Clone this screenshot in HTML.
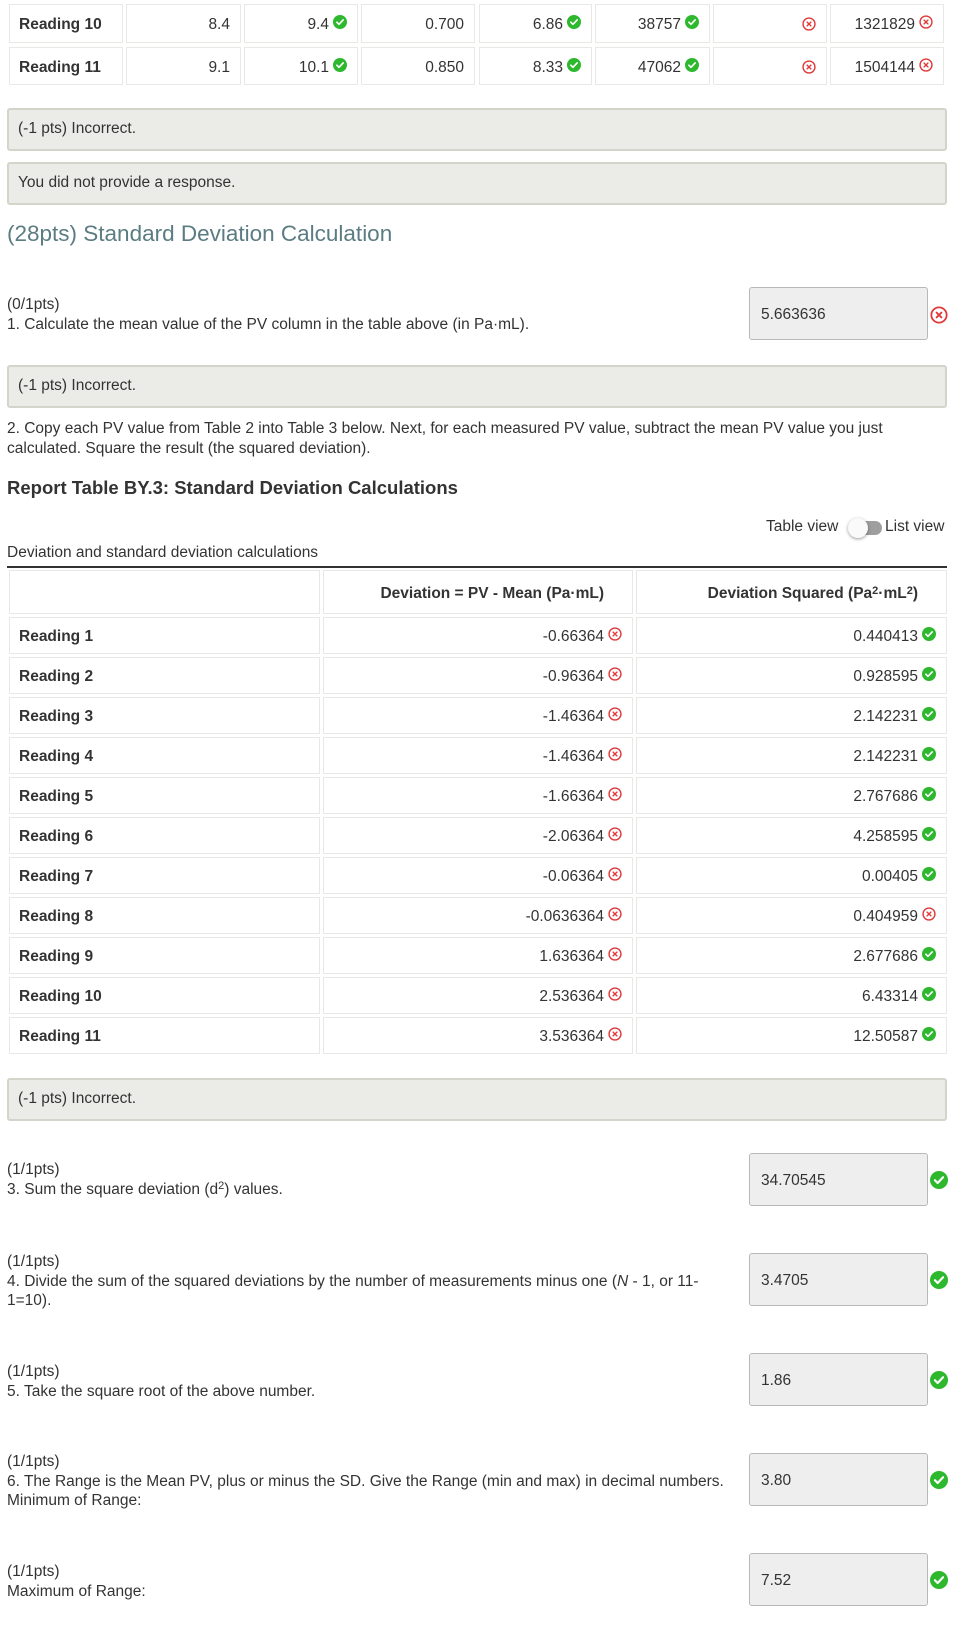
<!DOCTYPE html>
<html><head><meta charset="utf-8">
<style>
*{margin:0;padding:0;box-sizing:border-box}
body{width:977px;height:1651px;background:#fff;font-family:"Liberation Sans",Arial,sans-serif;color:#333;position:relative;overflow:hidden;font-size:15.5px}
.a{position:absolute}
.c{position:absolute;border:1px solid #e8e8e4;display:flex;align-items:center;justify-content:flex-end;padding-right:10px;padding-top:3px;white-space:nowrap}
.c.l{justify-content:flex-start;padding-left:9px;font-weight:bold}
.ic{width:14px;height:14px;margin-left:4px;position:relative;top:-3px;flex:none}
.fb{position:absolute;left:7px;width:940px;height:43px;background:#ebebe7;border:2px solid #d4d4ca;border-radius:3px;padding:10px 9px;font-size:15.5px}
.t{position:absolute;left:7px;white-space:nowrap;line-height:19.5px;font-size:15.5px}
.in{position:absolute;left:749px;width:179px;height:53px;background:#eeeeee;border:1px solid #b8b8b8;border-radius:3px;padding:18px 11px;font-size:15.5px}
.bi{position:absolute;left:930px;width:18px;height:18px}
.sp{font-size:11px;vertical-align:top;position:relative;top:-3px}
</style></head><body>
<svg width="0" height="0" style="position:absolute">
<defs>
<symbol id="ok" viewBox="0 0 20 20"><circle cx="10" cy="10" r="10" fill="#2eb82e"/><path d="M5.5 10.3l3 3 6-6.3" fill="none" stroke="#fff" stroke-width="2.4" stroke-linecap="round" stroke-linejoin="round"/></symbol>
<symbol id="no" viewBox="0 0 20 20"><circle cx="10" cy="10" r="8.5" fill="none" stroke="#e03a3a" stroke-width="2"/><path d="M7.3 7.3l5.4 5.4M12.7 7.3l-5.4 5.4" stroke="#e03a3a" stroke-width="2" stroke-linecap="round"/></symbol>
</defs></svg>

<div class="c l" style="left:9px;top:4px;width:114px;height:39px">Reading 10</div>
<div class="c" style="left:126px;top:4px;width:115px;height:39px">8.4</div>
<div class="c" style="left:244px;top:4px;width:114px;height:39px">9.4<svg class="ic"><use href="#ok"/></svg></div>
<div class="c" style="left:361px;top:4px;width:114px;height:39px">0.700</div>
<div class="c" style="left:479px;top:4px;width:113px;height:39px">6.86<svg class="ic"><use href="#ok"/></svg></div>
<div class="c" style="left:595px;top:4px;width:115px;height:39px">38757<svg class="ic"><use href="#ok"/></svg></div>
<div class="c" style="left:713px;top:4px;width:114px;height:39px"><svg class="ic" style="top:-1px"><use href="#no"/></svg></div>
<div class="c" style="left:830px;top:4px;width:114px;height:39px">1321829<svg class="ic"><use href="#no"/></svg></div>

<div class="c l" style="left:9px;top:47px;width:114px;height:38px">Reading 11</div>
<div class="c" style="left:126px;top:47px;width:115px;height:38px">9.1</div>
<div class="c" style="left:244px;top:47px;width:114px;height:38px">10.1<svg class="ic"><use href="#ok"/></svg></div>
<div class="c" style="left:361px;top:47px;width:114px;height:38px">0.850</div>
<div class="c" style="left:479px;top:47px;width:113px;height:38px">8.33<svg class="ic"><use href="#ok"/></svg></div>
<div class="c" style="left:595px;top:47px;width:115px;height:38px">47062<svg class="ic"><use href="#ok"/></svg></div>
<div class="c" style="left:713px;top:47px;width:114px;height:38px"><svg class="ic" style="top:-1px"><use href="#no"/></svg></div>
<div class="c" style="left:830px;top:47px;width:114px;height:38px">1504144<svg class="ic"><use href="#no"/></svg></div>

<div class="fb" style="top:108px">(-1 pts) Incorrect.</div>
<div class="fb" style="top:162px">You did not provide a response.</div>

<div class="a" style="left:7px;top:221px;font-size:22.5px;color:#5b7c82;white-space:nowrap">(28pts) Standard Deviation Calculation</div>

<div class="t" style="top:295px">(0/1pts)<br>1. Calculate the mean value of the PV column in the table above (in Pa·mL).</div>
<div class="in" style="top:287px">5.663636</div>
<svg class="bi" style="top:306px"><use href="#no"/></svg>

<div class="fb" style="top:365px">(-1 pts) Incorrect.</div>

<div class="t" style="top:419px">2. Copy each PV value from Table 2 into Table 3 below. Next, for each measured PV value, subtract the mean PV value you just<br>calculated. Square the result (the squared deviation).</div>

<div class="a" style="left:7px;top:477px;font-size:18.5px;font-weight:bold;white-space:nowrap">Report Table BY.3: Standard Deviation Calculations</div>

<div class="a" style="left:766px;top:518px;font-size:15.5px;white-space:nowrap">Table view</div>
<div class="a" style="left:856px;top:521px;width:26px;height:14px;border-radius:7px;background:#9e9e9e"></div>
<div class="a" style="left:848px;top:518px;width:20px;height:20px;border-radius:50%;background:#fafafa;box-shadow:0 1px 3px rgba(0,0,0,.4)"></div>
<div class="a" style="left:885px;top:518px;font-size:15.5px;white-space:nowrap">List view</div>

<div class="a" style="left:7px;top:544px;font-size:15.5px;white-space:nowrap">Deviation and standard deviation calculations</div>
<div class="a" style="left:7px;top:566px;width:940px;height:2px;background:#333"></div>

<div class="c" style="left:9px;top:570px;width:311px;height:44px"></div>
<div class="c" style="left:323px;top:570px;width:310px;height:44px;font-weight:bold;padding-right:28px">Deviation = PV - Mean (Pa·mL)</div>
<div class="c" style="left:636px;top:570px;width:311px;height:44px;font-weight:bold;padding-right:28px">Deviation Squared (Pa<span class="sp">2</span>·mL<span class="sp">2</span>)</div>

<div id="rows"></div>
<script>
var d=[["-0.66364","0.440413",1],["-0.96364","0.928595",1],["-1.46364","2.142231",1],["-1.46364","2.142231",1],["-1.66364","2.767686",1],["-2.06364","4.258595",1],["-0.06364","0.00405",1],["-0.0636364","0.404959",0],["1.636364","2.677686",1],["2.536364","6.43314",1],["3.536364","12.50587",1]];
var h="";
for(var i=0;i<d.length;i++){var y=617+i*40;
h+='<div class="c l" style="left:9px;top:'+y+'px;width:311px;height:37px">Reading '+(i+1)+'</div>';
h+='<div class="c" style="left:323px;top:'+y+'px;width:310px;height:37px">'+d[i][0]+'<svg class="ic"><use href="#no"/></svg></div>';
h+='<div class="c" style="left:636px;top:'+y+'px;width:311px;height:37px">'+d[i][1]+'<svg class="ic"><use href="#'+(d[i][2]?'ok':'no')+'"/></svg></div>';}
document.getElementById("rows").innerHTML=h;
</script>

<div class="fb" style="top:1078px">(-1 pts) Incorrect.</div>

<div class="t" style="top:1160px">(1/1pts)<br>3. Sum the square deviation (d<span class="sp">2</span>) values.</div>
<div class="in" style="top:1153px">34.70545</div>
<svg class="bi" style="top:1171px"><use href="#ok"/></svg>

<div class="t" style="top:1252px">(1/1pts)<br>4. Divide the sum of the squared deviations by the number of measurements minus one (<i>N</i> - 1, or 11-<br>1=10).</div>
<div class="in" style="top:1253px">3.4705</div>
<svg class="bi" style="top:1271px"><use href="#ok"/></svg>

<div class="t" style="top:1362px">(1/1pts)<br>5. Take the square root of the above number.</div>
<div class="in" style="top:1353px">1.86</div>
<svg class="bi" style="top:1371px"><use href="#ok"/></svg>

<div class="t" style="top:1452px">(1/1pts)<br>6. The Range is the Mean PV, plus or minus the SD. Give the Range (min and max) in decimal numbers.<br>Minimum of Range:</div>
<div class="in" style="top:1453px">3.80</div>
<svg class="bi" style="top:1471px"><use href="#ok"/></svg>

<div class="t" style="top:1562px">(1/1pts)<br>Maximum of Range:</div>
<div class="in" style="top:1553px">7.52</div>
<svg class="bi" style="top:1571px"><use href="#ok"/></svg>
</body></html>
